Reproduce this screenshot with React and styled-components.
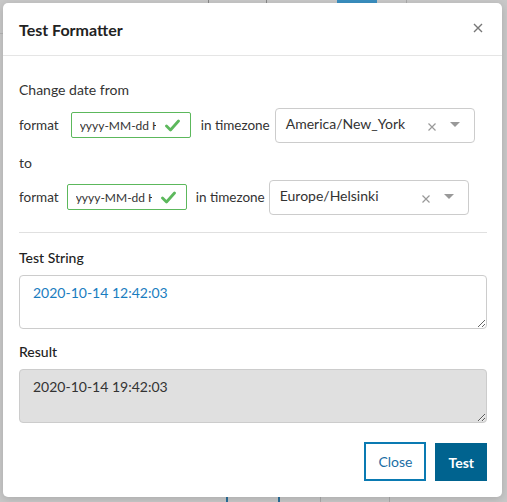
import React from "react";
import styled, { createGlobalStyle } from "styled-components";

const Global = createGlobalStyle`
  html, body { margin: 0; padding: 0; }
  body { font-family: Lato, "Open Sans", "Liberation Sans", sans-serif; color: #333; }
`;

const Backdrop = styled.div`
  position: relative;
  width: 507px;
  height: 502px;
  background: #c8c8c8;
  padding: 3px 5px 5px 3px;
  box-sizing: border-box;
  overflow: hidden;
`;

const PageLine = styled.div`
  position: absolute;
  background: ${(p) => p.color || "#b4b4b4"};
  left: ${(p) => p.x}px;
  top: ${(p) => p.y}px;
  width: ${(p) => p.w}px;
  height: ${(p) => p.h}px;
`;

const Modal = styled.div`
  position: relative;
  width: 499px;
  height: 494px;
  background: #fff;
  border-radius: 5px;
  box-shadow: 0 2px 8px rgba(0, 0, 0, 0.15);
  display: flex;
  flex-direction: column;
`;

const Header = styled.div`
  height: 53px;
  box-sizing: border-box;
  border-bottom: 1px solid #e5e5e5;
  display: flex;
  align-items: center;
  justify-content: space-between;
  padding: 0 17px 0 16px;
`;

const Title = styled.h4`
  margin: 0;
  font-size: 16px;
  font-weight: 700;
  color: #222;
`;

const CloseX = styled.button`
  border: 0;
  background: none;
  padding: 0;
  width: 12px;
  height: 12px;
  display: flex;
  color: #777;
`;

const Body = styled.div`
  padding: 24px 15px 0 16px;
  display: flex;
  flex-direction: column;
`;

const Text = styled.div`
  font-size: 14px;
  line-height: 20px;
  color: #333;
  margin-top: ${(p) => p.top || 0}px;
`;

const Row = styled.div`
  display: flex;
  align-items: center;
  margin-top: ${(p) => p.top}px;
  height: 34px;
`;

const Label = styled.span`
  font-size: 13.5px;
  color: #333;
  margin-right: ${(p) => p.gap}px;
  white-space: nowrap;
`;

const FormatBox = styled.div`
  width: 120px;
  height: 26px;
  box-sizing: border-box;
  border: 1px solid #5cb85c;
  border-radius: 2px;
  display: flex;
  align-items: center;
  padding: 0 10px 0 8px;
  margin-right: ${(p) => p.gap}px;
`;

const FormatText = styled.span`
  font-size: 12px;
  color: #333;
  width: 76px;
  overflow: hidden;
  white-space: nowrap;
  flex: none;
`;

const Check = styled.svg`
  margin-left: auto;
  width: 15px;
  height: 13px;
`;

const Select = styled.div`
  width: 200px;
  height: 35px;
  box-sizing: border-box;
  border: 1px solid #ccc;
  border-radius: 4px;
  display: flex;
  align-items: center;
  padding: 0 14px 0 10px;
`;

const SelectValue = styled.span`
  flex: 1;
  font-size: 14px;
  color: #333;
  margin-top: -3px;
`;

const Clear = styled.svg`
  width: 8px;
  height: 8px;
  margin-right: 14px;
  margin-top: 4px;
`;

const Caret = styled.span`
  width: 0;
  height: 0;
  border-left: 5px solid transparent;
  border-right: 5px solid transparent;
  border-top: 5px solid #999;
  margin-top: -2px;
`;

const Divider = styled.hr`
  border: 0;
  border-top: 1px solid #e0e0e0;
  margin: 18px 0 0;
  width: 468px;
`;

const SectionLabel = styled.div`
  font-size: 14px;
  font-weight: 500;
  color: #222;
  margin-top: ${(p) => p.top}px;
  line-height: 20px;
`;

const Area = styled.textarea`
  width: 468px;
  height: 54px;
  box-sizing: border-box;
  margin: 7px 0 0;
  border: 1px solid #ccc;
  border-radius: 4px;
  padding: 7px 13px;
  font-family: Lato, "Open Sans", sans-serif;
  font-size: 14px;
  line-height: 20px;
  color: ${(p) => (p.readOnly ? "#333" : "#1a7dc0")};
  background: ${(p) => (p.readOnly ? "#e0e0e0" : "#fff")};
  outline: none;
  display: block;
  resize: vertical;
`;

const Footer = styled.div`
  display: flex;
  justify-content: flex-end;
  align-items: flex-start;
  gap: 9px;
  padding: 19px 15px 0 16px;
`;

const Button = styled.button`
  height: ${(p) => (p.primary ? 38 : 39)}px;
  margin-top: ${(p) => (p.primary ? 1 : 0)}px;
  padding: 0 ${(p) => (p.primary ? 13 : 12)}px;
  box-sizing: border-box;
  font-family: Lato, "Open Sans", sans-serif;
  font-size: 14px;
  font-weight: ${(p) => (p.primary ? 700 : 400)};
  border-radius: 0;
  border: ${(p) => (p.primary ? "0" : "2px solid #0a7ab2")};
  background: ${(p) => (p.primary ? "#00638f" : "#fff")};
  color: ${(p) => (p.primary ? "#fff" : "#1a6ea5")};
`;

function FormatInput({ gap }) {
  return (
    <FormatBox gap={gap}>
      <FormatText>yyyy-MM-dd HH:mm:ss</FormatText>
      <Check viewBox="0 0 15 13">
        <path d="M1.5 7 L5.5 11 L13.5 2" fill="none" stroke="#5cb85c" strokeWidth="2.8" strokeLinecap="round" strokeLinejoin="round" />
      </Check>
    </FormatBox>
  );
}

function TzSelect({ value }) {
  return (
    <Select>
      <SelectValue>{value}</SelectValue>
      <Clear viewBox="0 0 8 8">
        <path d="M0.5 0.5 L7.5 7.5 M7.5 0.5 L0.5 7.5" stroke="#999" strokeWidth="1.2" />
      </Clear>
      <Caret />
    </Select>
  );
}

export default function App() {
  return (
    <>
      <Global />
      <Backdrop>
        <PageLine x={0} y={33} w={3} h={1} />
        <PageLine x={208} y={0} w={1} h={3} color="#888" />
        <PageLine x={266} y={0} w={1} h={3} color="#888" />
        <PageLine x={337} y={0} w={40} h={3} color="#3a8fc0" />
        <PageLine x={406} y={0} w={1} h={3} color="#aaa" />
        <PageLine x={226} y={497} w={2} h={5} color="#2a6e9a" />
        <PageLine x={278} y={497} w={2} h={5} color="#2a6e9a" />
        <PageLine x={320} y={497} w={1} h={5} color="#aaa" />
        <PageLine x={389} y={497} w={1} h={5} color="#aaa" />
        <Modal>
          <Header>
            <Title>Test Formatter</Title>
            <CloseX aria-label="close">
              <svg viewBox="0 0 10 10" width="10" height="10">
                <path d="M1 1 L9 9 M9 1 L1 9" stroke="#777" strokeWidth="1.4" />
              </svg>
            </CloseX>
          </Header>
          <Body>
            <Text>Change date from</Text>
            <Row top={8}>
              <Label gap={12}>format</Label>
              <FormatInput gap={10} />
              <Label gap={5}>in timezone</Label>
              <TzSelect value="America/New_York" />
            </Row>
            <Text top={11}>to</Text>
            <Row top={7}>
              <Label gap={8}>format</Label>
              <FormatInput gap={9} />
              <Label gap={4}>in timezone</Label>
              <TzSelect value="Europe/Helsinki" />
            </Row>
            <Divider />
            <SectionLabel top={15}>Test String</SectionLabel>
            <Area defaultValue="2020-10-14 12:42:03" />
            <SectionLabel top={13}>Result</SectionLabel>
            <Area readOnly value="2020-10-14 19:42:03" />
          </Body>
          <Footer>
            <Button>Close</Button>
            <Button primary>Test</Button>
          </Footer>
        </Modal>
      </Backdrop>
    </>
  );
}
